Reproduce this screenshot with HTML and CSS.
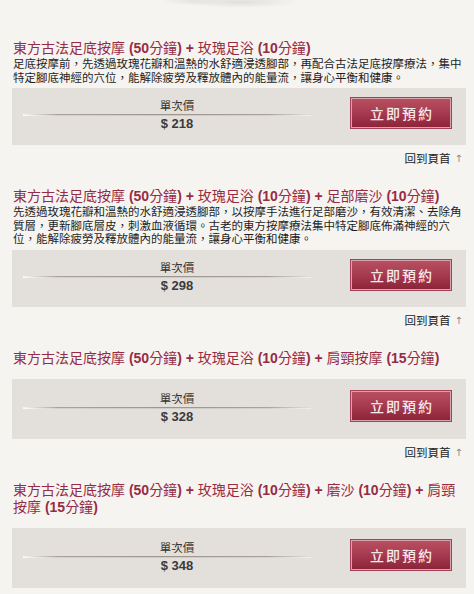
FILE: index.html
```html
<!DOCTYPE html>
<html lang="zh-Hant">
<head>
<meta charset="utf-8">
<title>足底按摩</title>
<link rel="stylesheet" href="styles.css">
</head>
<body>
<main class="page">
  <section class="item">
    <h2 class="title">東方古法足底按摩 <b>(50</b>分鐘<b>) + </b>玫瑰足浴 <b>(10</b>分鐘<b>)</b></h2>
    <p class="desc">足底按摩前，先透過玫瑰花瓣和溫熱的水舒適浸透腳部，再配合古法足底按摩療法，集中特定腳底神經的穴位，能解除疲勞及釋放體內的能量流，讓身心平衡和健康。</p>
    <div class="price-box">
      <div class="price-col">
        <div class="price-label">單次價</div>
        <div class="price-rule"></div>
        <div class="price-value">$ 218</div>
      </div>
      <a class="book-btn" href="#">立即預約</a>
    </div>
    <div class="back-top"><a href="#">回到頁首</a><span class="arrow">↑</span></div>
  </section>

  <section class="item">
    <h2 class="title">東方古法足底按摩 <b>(50</b>分鐘<b>) + </b>玫瑰足浴 <b>(10</b>分鐘<b>) + </b>足部磨沙 <b>(10</b>分鐘<b>)</b></h2>
    <p class="desc">先透過玫瑰花瓣和溫熱的水舒適浸透腳部，以按摩手法進行足部磨沙，有效清潔、去除角質層，更新腳底層皮，刺激血液循環。古老的東方按摩療法集中特定腳底佈滿神經的穴位，能解除疲勞及釋放體內的能量流，讓身心平衡和健康。</p>
    <div class="price-box">
      <div class="price-col">
        <div class="price-label">單次價</div>
        <div class="price-rule"></div>
        <div class="price-value">$ 298</div>
      </div>
      <a class="book-btn" href="#">立即預約</a>
    </div>
    <div class="back-top"><a href="#">回到頁首</a><span class="arrow">↑</span></div>
  </section>

  <section class="item">
    <h2 class="title title-only">東方古法足底按摩 <b>(50</b>分鐘<b>) + </b>玫瑰足浴 <b>(10</b>分鐘<b>) + </b>肩頸按摩 <b>(15</b>分鐘<b>)</b></h2>
    <div class="price-box tall">
      <div class="price-col">
        <div class="price-label">單次價</div>
        <div class="price-rule"></div>
        <div class="price-value">$ 328</div>
      </div>
      <a class="book-btn" href="#">立即預約</a>
    </div>
    <div class="back-top"><a href="#">回到頁首</a><span class="arrow">↑</span></div>
  </section>

  <section class="item">
    <h2 class="title title-only">東方古法足底按摩 <b>(50</b>分鐘<b>) + </b>玫瑰足浴 <b>(10</b>分鐘<b>) + </b>磨沙 <b>(10</b>分鐘<b>) + </b>肩頸按摩 <b>(15</b>分鐘<b>)</b></h2>
    <div class="price-box tall">
      <div class="price-col">
        <div class="price-label">單次價</div>
        <div class="price-rule"></div>
        <div class="price-value">$ 348</div>
      </div>
      <a class="book-btn" href="#">立即預約</a>
    </div>
  </section>
</main>
</body>
</html>
```

FILE: styles.css
```css
html, body {
  margin: 0;
  padding: 0;
}

body {
  background-color: #f6f4f1;
  background-image:
    radial-gradient(ellipse 60px 6px at 240px 2px, rgba(150, 145, 140, 0.22), rgba(150, 145, 140, 0) 100%),
    radial-gradient(ellipse 30px 4px at 190px 1px, rgba(150, 145, 140, 0.15), rgba(150, 145, 140, 0) 100%);
  background-repeat: no-repeat;
  font-family: "Liberation Sans", "Noto Sans CJK TC", sans-serif;
  color: #222;
  width: 474px;
  height: 594px;
  overflow: hidden;
}

.page {
  padding: 40px 8px 0 12px;
  display: flex;
  flex-direction: column;
}

.item {
  display: flex;
  flex-direction: column;
}

.title {
  margin: 0 0 0 1px;
  font-size: 14px;
  line-height: 17px;
  font-weight: normal;
  color: #962c44;
}

.title b {
  font-weight: bold;
}

.title-only {
  margin-bottom: 12px;
}

.desc {
  margin: 1px 0 3px 1px;
  font-size: 11.5px;
  line-height: 13.5px;
  color: #1e1e1e;
}

.price-box {
  background: #e3dfdb;
  height: 57px;
  box-sizing: border-box;
  padding: 10px 15px 0 11px;
  display: flex;
  align-items: flex-start;
}

.price-box.tall {
  height: 60px;
  padding-top: 12px;
}

.price-col {
  width: 308px;
  display: flex;
  flex-direction: column;
  align-items: center;
}

.price-label {
  font-size: 11.5px;
  line-height: 16px;
  color: #333;
}

.price-rule {
  align-self: stretch;
  margin-right: 20px;
  height: 1px;
  background: linear-gradient(to right, rgba(255,255,255,0.7) 0%, #aaa39c 12%, #9d968f 50%, #aaa39c 85%, rgba(170,163,156,0) 100%);
  border-bottom: 1px solid rgba(255, 255, 255, 0.5);
}

.price-value {
  font-size: 13px;
  line-height: 16px;
  font-weight: bold;
  color: #3a3a3a;
}

.book-btn {
  margin-left: auto;
  width: 100px;
  height: 30px;
  box-sizing: border-box;
  border: 1px solid #d7a3ad;
  outline: 1px solid #a34158;
  background: linear-gradient(to bottom, #b8505f 0%, #a63a50 50%, #8d2438 100%);
  color: #f7e9ea;
  text-decoration: none;
  font-family: "Noto Sans CJK TC", sans-serif;
  font-size: 14px;
  font-weight: 500;
  letter-spacing: 2px;
  display: flex;
  align-items: center;
  justify-content: center;
  padding-left: 2px;
}

.back-top {
  align-self: flex-end;
  margin: 6px 3px 21px 0;
  font-size: 11.5px;
  line-height: 16px;
  display: flex;
  align-items: center;
  gap: 4px;
}

.back-top a {
  color: #222;
  text-decoration: none;
}

.back-top .arrow {
  font-family: "DejaVu Sans", sans-serif;
  font-size: 10px;
  color: #8a8a8a;
}
```
